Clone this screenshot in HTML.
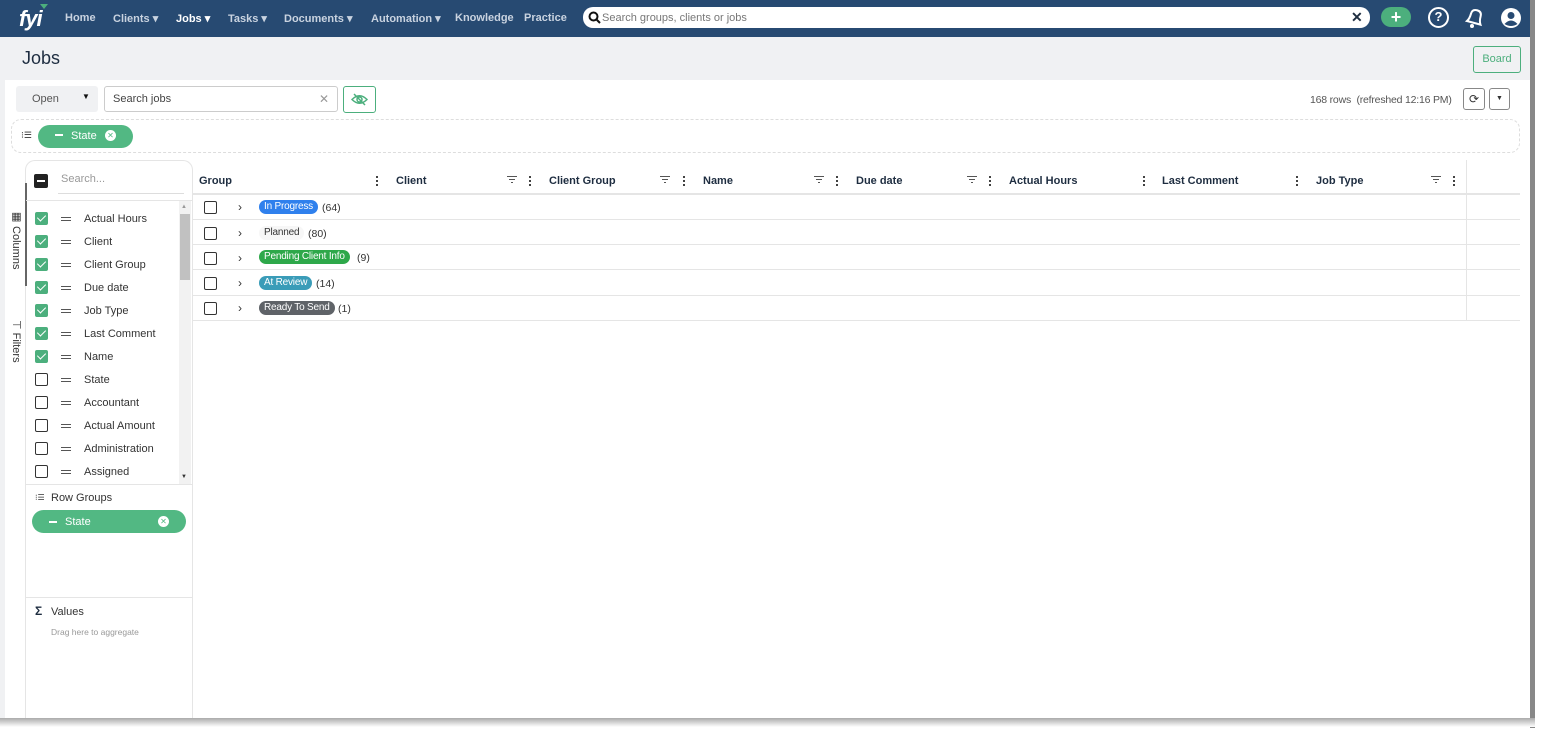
<!DOCTYPE html>
<html><head><meta charset="utf-8"><style>
*{box-sizing:border-box;margin:0;padding:0}
body{width:1543px;height:736px;background:#fff;font-family:"Liberation Sans",sans-serif;position:relative;overflow:hidden;font-size:11px;color:#333}
.a{position:absolute}
.nav{left:0;top:0;width:1530px;height:37px;background:#274a72}
.nav span{position:absolute;top:12px;color:#c9d3e0;font-weight:bold;font-size:11px}
.shadowR{left:1530px;top:0;width:5px;height:728px;background:#888}
.shadowB{left:0;top:718px;width:1535px;height:9px;background:linear-gradient(#aaa,#fff)}
.cb{position:absolute;width:13px;height:13px;border:1.5px solid #333;border-radius:2px;background:#fff}
.cb.on{background:#4caf7d;border-color:#4caf7d}
.cb.on:after{content:"";position:absolute;left:3px;top:0px;width:4px;height:7px;border:solid #fff;border-width:0 1.5px 1.5px 0;transform:rotate(45deg)}
.col{position:absolute;left:84px;font-size:11px;color:#333}
.eq{position:absolute;left:61px;width:10px;height:4px;border-top:1.5px solid #555;border-bottom:1.5px solid #555}
.hd{position:absolute;top:175px;font-weight:bold;font-size:11px;color:#1e2d40}
.dots{position:absolute;top:175px;width:2px;height:11px;background:radial-gradient(circle,#333 1px,transparent 1.2px) 0 0/2px 4px}
.fl{position:absolute;top:176px;width:10px;height:8px;border-top:1.5px solid #555}
.fl:before{content:"";position:absolute;left:2px;top:2px;width:6px;border-top:1.5px solid #555}
.fl:after{content:"";position:absolute;left:4px;top:5px;width:2px;border-top:1.5px solid #555}
.row{position:absolute;left:193px;width:1327px;height:1px;background:#e5e5e5}
.pill{position:absolute;left:259px;height:14px;border-radius:8px;padding:0 5px;font-size:10px;line-height:14px;color:#fff;letter-spacing:-0.2px}
.cnt{position:absolute;font-size:10.5px;color:#333}
.chev{position:absolute;left:238px;font-size:12px;color:#333}
</style></head><body>
<div class="a nav">
 <div class="a" style="left:19px;top:6px;color:#fff;font-weight:bold;font-size:22px;font-style:italic;letter-spacing:-1px">fyi</div>
 <div class="a" style="left:40px;top:4px;width:0;height:0;border-left:4px solid transparent;border-right:4px solid transparent;border-top:5px solid #4caf7d"></div>
 <span style="left:65px">Home</span><span style="left:113px">Clients ▾</span><span style="left:176px;color:#fff">Jobs ▾</span>
 <span style="left:228px">Tasks ▾</span><span style="left:284px">Documents ▾</span><span style="left:371px">Automation ▾</span>
 <span style="left:455px">Knowledge</span><span style="left:524px">Practice</span>
 <div class="a" style="left:583px;top:7px;width:787px;height:21px;background:#fff;border-radius:10px">
  <svg class="a" style="left:5px;top:4px" width="13" height="13"><circle cx="5.5" cy="5.5" r="4" stroke="#111" stroke-width="2" fill="none"/><path d="M8.5 8.5L12 12" stroke="#111" stroke-width="2"/></svg>
  <div class="a" style="left:19px;top:5px;color:#777;font-size:11px">Search groups, clients or jobs</div>
  <div class="a" style="left:768px;top:2px;color:#1e2d40;font-weight:bold;font-size:14px">✕</div>
 </div>
 <div class="a" style="left:1381px;top:7px;width:30px;height:20px;background:#4caf7d;border-radius:10px;color:#fff;font-weight:bold;font-size:18px;text-align:center;line-height:20px">+</div>
 <div class="a" style="left:1428px;top:7px;width:21px;height:21px;border:2.5px solid #fff;border-radius:50%;color:#fff;font-weight:bold;font-size:13px;text-align:center;line-height:16px">?</div>
 <svg class="a" style="left:1463px;top:6px" width="22" height="24"><path d="M5 17 Q7 14 7 9 Q7 4 12 4 Q17 4 17 9 Q17 14 19 17 Z" fill="none" stroke="#fff" stroke-width="2" transform="rotate(15 12 12)"/><circle cx="9" cy="20" r="2" fill="#fff"/></svg>
 <svg class="a" style="left:1500px;top:7px" width="22" height="22"><circle cx="11" cy="11" r="10" fill="#fff"/><circle cx="11" cy="8.5" r="3.5" fill="#274a72"/><path d="M4.5 17 Q11 10 17.5 17 Q11 21 4.5 17Z" fill="#274a72"/></svg>
</div>
<div class="a" style="left:0;top:37px;width:1530px;height:43px;background:#f0f1f3"></div>
<div class="a" style="left:22px;top:48px;font-size:18px;color:#1e2d40">Jobs</div>
<div class="a" style="left:1473px;top:46px;width:48px;height:27px;border:1px solid #4caf7d;border-radius:3px;color:#4caf7d;font-size:11px;text-align:center;line-height:25px">Board</div>
<div class="a" style="left:0;top:80px;width:5px;height:638px;background:#f0f1f3"></div>
<div class="a" style="left:16px;top:86px;width:82px;height:26px;background:#f0f1f3;border-radius:3px"></div>
<div class="a" style="left:32px;top:93px;color:#555">Open</div>
<div class="a" style="left:82px;top:92px;font-size:8px;color:#111">▼</div>
<div class="a" style="left:104px;top:86px;width:234px;height:26px;border:1px solid #ccc;border-radius:3px"></div>
<div class="a" style="left:113px;top:93px;color:#444">Search jobs</div>
<div class="a" style="left:319px;top:92px;color:#999;font-size:12px">✕</div>
<div class="a" style="left:343px;top:86px;width:33px;height:27px;border:1px solid #4caf7d;border-radius:3px"></div>
<svg class="a" style="left:351px;top:93px" width="17" height="13"><path d="M1 6.5Q8.5 -1 16 6.5Q8.5 14 1 6.5Z" fill="none" stroke="#4caf7d" stroke-width="1.5"/><circle cx="8.5" cy="6.5" r="2.5" fill="none" stroke="#4caf7d" stroke-width="1.5"/><path d="M3 1L14 12" stroke="#4caf7d" stroke-width="1.5"/></svg>
<div class="a" style="left:1310px;top:94px;color:#555;font-size:10.5px;letter-spacing:-0.2px">168 rows &nbsp;(refreshed 12:16 PM)</div>
<div class="a" style="left:1463px;top:88px;width:22px;height:22px;border:1px solid #888;border-radius:3px;text-align:center;line-height:20px;font-size:12px;color:#333">⟳</div>
<div class="a" style="left:1489px;top:88px;width:21px;height:22px;border:1px solid #888;border-radius:3px;text-align:center;line-height:20px;font-size:7px;color:#333">▼</div>
<div class="a" style="left:11px;top:119px;width:1509px;height:34px;border:1.5px dashed #ddd;border-radius:10px"></div>
<div class="a" style="left:21px;top:130px;font-size:9px;color:#333">⁝☰</div>
<div class="a" style="left:38px;top:125px;width:95px;height:23px;background:#52b883;border-radius:12px"></div>
<div class="a" style="left:55px;top:134px;width:8px;border-top:2px solid #fff"></div>
<div class="a" style="left:71px;top:130px;color:#fff">State</div>
<div class="a" style="left:105px;top:130px;width:11px;height:11px;border-radius:50%;background:#fff;color:#52b883;font-size:8px;text-align:center;line-height:11px">✕</div>
<!-- sidebar -->
<div class="a" style="left:25px;top:160px;width:168px;height:558px;border:1px solid #e5e5e5;border-bottom:none;border-radius:10px 10px 0 0"></div>
<div class="a" style="left:25px;top:183px;width:2px;height:103px;background:#666"></div>
<div class="a" style="left:10px;top:210px;font-size:11px;color:#333;writing-mode:vertical-rl">▦ Columns</div>
<div class="a" style="left:10px;top:320px;font-size:11px;color:#333;writing-mode:vertical-rl">⊤ Filters</div>
<div class="a" style="left:34px;top:174px;width:14px;height:14px;background:#222;border-radius:2px"></div>
<div class="a" style="left:37px;top:180px;width:8px;border-top:2px solid #fff"></div>
<div class="a" style="left:61px;top:173px;color:#999">Search...</div>
<div class="a" style="left:58px;top:193px;width:126px;height:1px;background:#ddd"></div>
<div class="a" style="left:26px;top:200px;width:166px;height:1px;background:#e5e5e5"></div>
<div class="a" style="left:179px;top:201px;width:12px;height:283px;background:#f2f2f2"></div>
<div class="a" style="left:180px;top:214px;width:10px;height:66px;background:#c1c1c1"></div>
<div class="a" style="left:181px;top:204px;font-size:6px;color:#999">▲</div>
<div class="a" style="left:181px;top:474px;font-size:6px;color:#333">▼</div>
<div class="cb on" style="left:35px;top:212px"></div><div class="eq" style="top:217px"></div><div class="col" style="top:213px">Actual Hours</div>
<div class="cb on" style="left:35px;top:235px"></div><div class="eq" style="top:240px"></div><div class="col" style="top:236px">Client</div>
<div class="cb on" style="left:35px;top:258px"></div><div class="eq" style="top:263px"></div><div class="col" style="top:259px">Client Group</div>
<div class="cb on" style="left:35px;top:281px"></div><div class="eq" style="top:286px"></div><div class="col" style="top:282px">Due date</div>
<div class="cb on" style="left:35px;top:304px"></div><div class="eq" style="top:309px"></div><div class="col" style="top:305px">Job Type</div>
<div class="cb on" style="left:35px;top:327px"></div><div class="eq" style="top:332px"></div><div class="col" style="top:328px">Last Comment</div>
<div class="cb on" style="left:35px;top:350px"></div><div class="eq" style="top:355px"></div><div class="col" style="top:351px">Name</div>
<div class="cb" style="left:35px;top:373px"></div><div class="eq" style="top:378px"></div><div class="col" style="top:374px">State</div>
<div class="cb" style="left:35px;top:396px"></div><div class="eq" style="top:401px"></div><div class="col" style="top:397px">Accountant</div>
<div class="cb" style="left:35px;top:419px"></div><div class="eq" style="top:424px"></div><div class="col" style="top:420px">Actual Amount</div>
<div class="cb" style="left:35px;top:442px"></div><div class="eq" style="top:447px"></div><div class="col" style="top:443px">Administration</div>
<div class="cb" style="left:35px;top:465px"></div><div class="eq" style="top:470px"></div><div class="col" style="top:466px">Assigned</div>
<div class="a" style="left:26px;top:484px;width:166px;height:1px;background:#e5e5e5"></div>
<div class="a" style="left:35px;top:493px;font-size:8px;color:#333">⁝☰</div>
<div class="a" style="left:51px;top:492px;color:#333">Row Groups</div>
<div class="a" style="left:32px;top:510px;width:154px;height:23px;background:#52b883;border-radius:12px"></div>
<div class="a" style="left:49px;top:521px;width:8px;border-top:2px solid #fff"></div>
<div class="a" style="left:65px;top:516px;color:#fff">State</div>
<div class="a" style="left:158px;top:516px;width:11px;height:11px;border-radius:50%;background:#fff;color:#52b883;font-size:8px;text-align:center;line-height:11px">✕</div>
<div class="a" style="left:26px;top:597px;width:166px;height:1px;background:#e5e5e5"></div>
<div class="a" style="left:35px;top:604px;font-weight:bold;font-size:12px;color:#1e2d40">Σ</div>
<div class="a" style="left:51px;top:606px;color:#333">Values</div>
<div class="a" style="left:51px;top:627px;font-size:8.5px;color:#999">Drag here to aggregate</div>
<!-- grid -->
<div class="a" style="left:1466px;top:160px;width:1px;height:160px;background:#e5e5e5"></div>
<div class="hd" style="left:199px">Group</div><div class="dots" style="left:376px"></div>
<div class="hd" style="left:396px">Client</div><div class="fl" style="left:507px"></div><div class="dots" style="left:529px"></div>
<div class="hd" style="left:549px">Client Group</div><div class="fl" style="left:660px"></div><div class="dots" style="left:683px"></div>
<div class="hd" style="left:703px">Name</div><div class="fl" style="left:814px"></div><div class="dots" style="left:836px"></div>
<div class="hd" style="left:856px">Due date</div><div class="fl" style="left:967px"></div><div class="dots" style="left:989px"></div>
<div class="hd" style="left:1009px">Actual Hours</div><div class="dots" style="left:1143px"></div>
<div class="hd" style="left:1162px">Last Comment</div><div class="dots" style="left:1296px"></div>
<div class="hd" style="left:1316px">Job Type</div><div class="fl" style="left:1431px"></div><div class="dots" style="left:1453px"></div>
<div class="row" style="top:193px;height:2px"></div>
<div class="row" style="top:219px"></div><div class="row" style="top:244px"></div><div class="row" style="top:269px"></div><div class="row" style="top:295px"></div><div class="row" style="top:320px"></div>
<div class="cb" style="left:204px;top:201px"></div><div class="chev" style="top:200px">›</div>
<div class="pill" style="top:200px;background:#2f80ed">In Progress</div><div class="cnt" style="left:322px;top:202px">(64)</div>
<div class="cb" style="left:204px;top:227px"></div><div class="chev" style="top:226px">›</div>
<div class="pill" style="top:226px;background:#f7f7f7;color:#333">Planned</div><div class="cnt" style="left:308px;top:228px">(80)</div>
<div class="cb" style="left:204px;top:252px"></div><div class="chev" style="top:251px">›</div>
<div class="pill" style="top:250px;background:#2ea84a">Pending Client Info</div><div class="cnt" style="left:357px;top:252px">(9)</div>
<div class="cb" style="left:204px;top:277px"></div><div class="chev" style="top:276px">›</div>
<div class="pill" style="top:276px;background:#3a9cb8">At Review</div><div class="cnt" style="left:316px;top:278px">(14)</div>
<div class="cb" style="left:204px;top:302px"></div><div class="chev" style="top:301px">›</div>
<div class="pill" style="top:301px;background:#5f6368">Ready To Send</div><div class="cnt" style="left:338px;top:303px">(1)</div>
<div class="a shadowR"></div>
<div class="a shadowB"></div>
</body></html>
